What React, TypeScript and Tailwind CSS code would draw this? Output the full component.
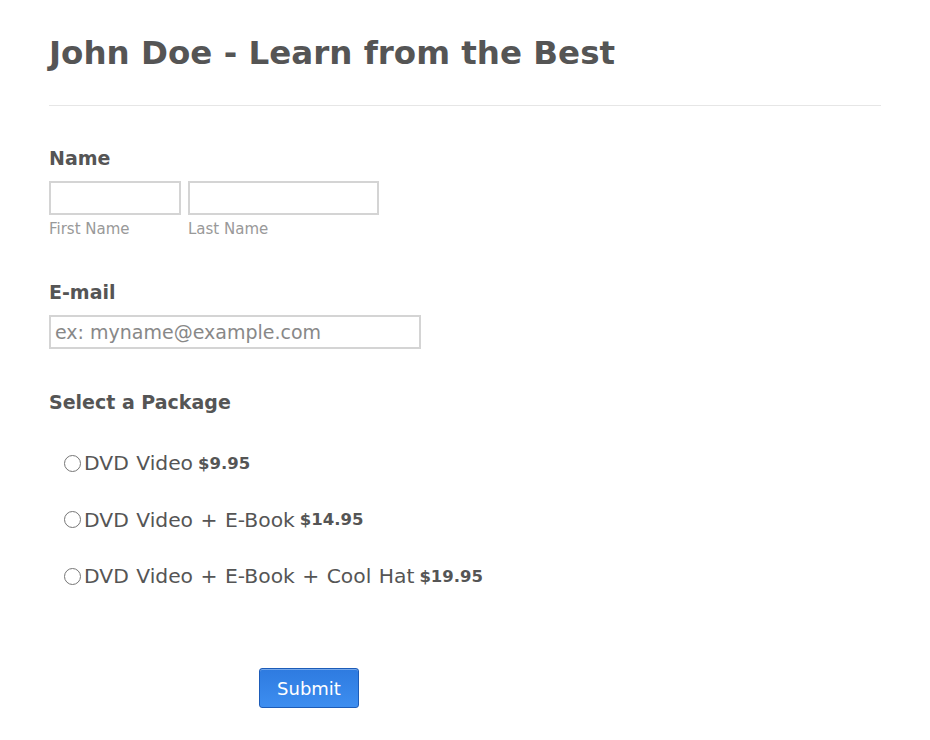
import React from 'react'

const packages = [
  { label: 'DVD Video', price: '$9.95' },
  { label: 'DVD Video + E-Book', price: '$14.95' },
  { label: 'DVD Video + E-Book + Cool Hat', price: '$19.95' },
]

export default function App() {
  return (
    <div className="min-h-screen bg-white font-['DejaVu_Sans',Verdana,sans-serif] text-[#555555]">
      <form className="ml-[49px] w-[832px] pt-[33px]" onSubmit={(e) => e.preventDefault()}>
        {/* Header */}
        <h1 className="pb-[32px] text-[32.5px] font-bold leading-[40px] text-[#555555]">
          John Doe - Learn from the Best
        </h1>
        <div className="h-px w-full bg-[#e6e6e6]" />

        {/* Name */}
        <div className="mt-[39px]">
          <label className="block text-[19px] font-bold leading-[26px]">Name</label>
          <div className="mt-[10px] flex gap-[7px]">
            <div className="flex flex-col">
              <input className="h-[34px] w-[132px] border-2 border-[#d4d4d4] bg-white px-1 outline-none" />
              <span className="mt-[4px] text-[15px] leading-[20px] text-[#999999]">First Name</span>
            </div>
            <div className="flex flex-col">
              <input className="h-[34px] w-[191px] border-2 border-[#d4d4d4] bg-white px-1 outline-none" />
              <span className="mt-[4px] text-[15px] leading-[20px] text-[#999999]">Last Name</span>
            </div>
          </div>
        </div>

        {/* E-mail */}
        <div className="mt-[40px]">
          <label className="block text-[19px] font-bold leading-[26px]">E-mail</label>
          <input
            placeholder="ex: myname@example.com"
            className="mt-[10px] h-[34px] w-[372px] border-2 border-[#d4d4d4] bg-white px-[4px] text-[19px] text-[#555555] outline-none placeholder:text-[#888888]"
          />
        </div>

        {/* Package */}
        <div className="mt-[40px]">
          <label className="block text-[19px] font-bold leading-[26px]">Select a Package</label>
          <div className="mt-[36px] flex flex-col gap-[32.5px] pl-[15px]">
            {packages.map((p) => (
              <label key={p.label} className="flex h-[24px] items-center">
                <span className="mr-[3px] h-[17px] w-[17px] rounded-full border border-[#767676] bg-white" />
                <span className="text-[20.3px] leading-[24px] [word-spacing:1px]">{p.label}</span>
                <span className="ml-[5px] mt-[2px] text-[16.5px] font-bold">{p.price}</span>
              </label>
            ))}
          </div>
        </div>

        {/* Submit */}
        <div className="mt-[80px] pl-[210px]">
          <button
            type="submit"
            className="h-[40px] w-[100px] rounded-[3px] border border-[#1d5cb8] bg-gradient-to-b from-[#2e7be0] to-[#3d8ef0] text-[18px] text-white shadow-[inset_0_1px_0_rgba(255,255,255,0.35)]"
          >
            Submit
          </button>
        </div>
      </form>
    </div>
  )
}
